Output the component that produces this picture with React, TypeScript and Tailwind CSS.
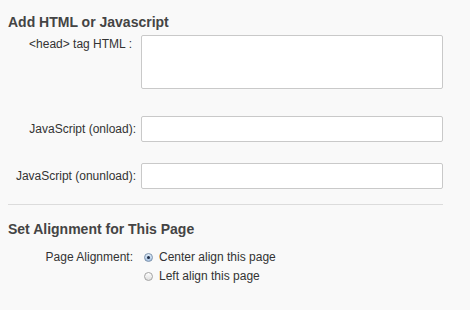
const labelCls = "w-[128px] shrink-0 text-right text-[12px] leading-[14px] text-[#333]";
const fieldCls = "ml-[5px] w-[302px] rounded-[2px] border border-[#c9c9c9] bg-white";

function Radio({ checked }: { checked?: boolean }) {
  return checked ? (
    <span className="flex h-[9px] w-[9px] items-center justify-center rounded-full border border-[#7d93ad] bg-gradient-to-b from-[#e2edf8] to-[#a7c2e2]">
      <span className="h-[3px] w-[3px] rounded-full bg-[#1c2b45]" />
    </span>
  ) : (
    <span className="h-[9px] w-[9px] rounded-full border border-[#a3a3a3] bg-gradient-to-b from-white to-[#dedede]" />
  );
}

export default function App() {
  return (
    <div className="h-[310px] w-[470px] bg-[#f9f9f9] px-[8px] pt-[14px] font-['Liberation_Sans',Arial,sans-serif]">
      {/* html / js section */}
      <h2 className="text-[14px] font-bold leading-[17px] text-[#444]">Add HTML or Javascript</h2>
      <div className="mt-[4px] flex items-start">
        <label className={labelCls + " pt-[2px] pr-[4px]"}>&lt;head&gt; tag HTML :</label>
        <textarea className={fieldCls + " h-[54px] resize-none"} />
      </div>
      <div className="mt-[27px] flex items-center">
        <label className={labelCls}>JavaScript (onload):</label>
        <input className={fieldCls + " h-[26px]"} />
      </div>
      <div className="mt-[21px] flex items-center">
        <label className={labelCls}>JavaScript (onunload):</label>
        <input className={fieldCls + " h-[26px]"} />
      </div>

      <div className="mt-[15px] h-px w-[435px] bg-[#dcdcdc]" />

      {/* alignment section */}
      <h2 className="mt-[16px] text-[14px] font-bold leading-[17px] text-[#444]">Set Alignment for This Page</h2>
      <div className="mt-[10px] flex text-[12px] leading-[19px] text-[#333]">
        <span className="w-[125px] text-right">Page Alignment:</span>
        <div className="ml-[11px] flex flex-col">
          <label className="flex items-center gap-[6px]">
            <Radio checked />
            Center align this page
          </label>
          <label className="flex items-center gap-[6px]">
            <Radio />
            Left align this page
          </label>
        </div>
      </div>
    </div>
  );
}
